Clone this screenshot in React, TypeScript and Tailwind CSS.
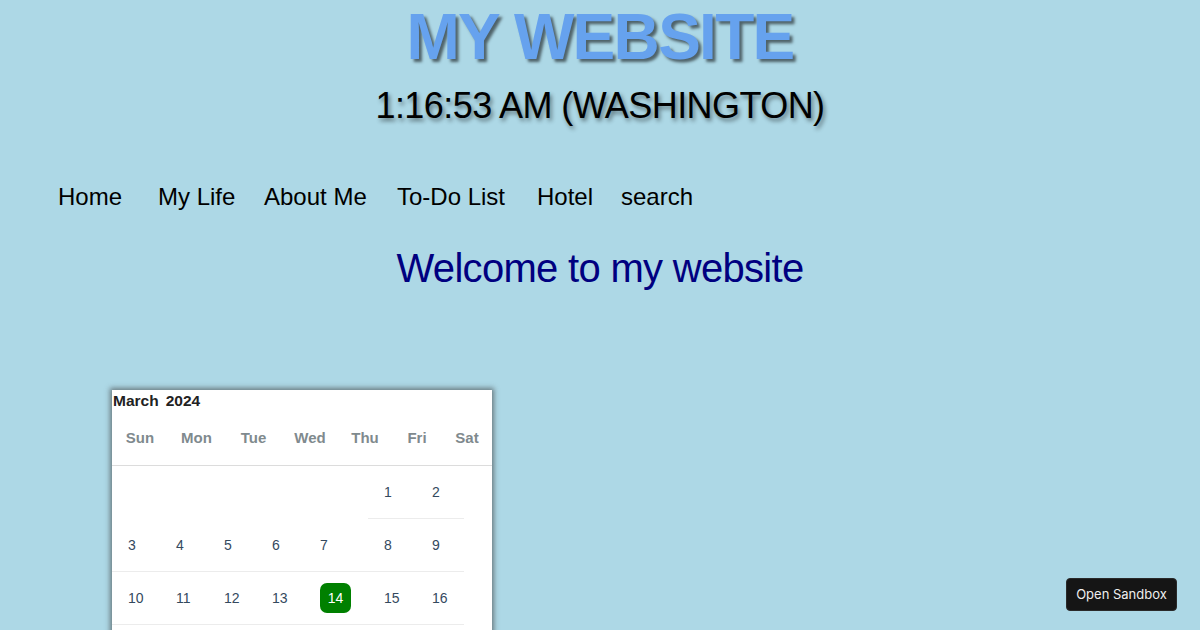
const navLinks = [
  { name: "Home", width: "w-[100px]" },
  { name: "My Life", width: "w-[106px]" },
  { name: "About Me", width: "w-[133px]" },
  { name: "To-Do List", width: "w-[140px]" },
  { name: "Hotel", width: "w-[84px]" },
  { name: "search", width: "w-auto" },
];

const weekDays = [
  { name: "Sun", width: "w-[56px]" },
  { name: "Mon", width: "w-[57px]" },
  { name: "Tue", width: "w-[57px]" },
  { name: "Wed", width: "w-[56px]" },
  { name: "Thu", width: "w-[54px]" },
  { name: "Fri", width: "w-[50px]" },
  { name: "Sat", width: "w-[50px]" },
];

// March 2024 starts on a Friday
const weeks: (number | null)[][] = [
  [null, null, null, null, null, 1, 2],
  [3, 4, 5, 6, 7, 8, 9],
  [10, 11, 12, 13, 14, 15, 16],
  [17, 18, 19, 20, 21, 22, 23],
];

const colWidths = ["w-[48px]", "w-[48px]", "w-[48px]", "w-[48px]", "w-[64px]", "w-[48px]", "w-[48px]"];

const Calendar = () => {
  return (
    <div className="w-[380px] bg-white shadow-[0_0_5px_2px_rgba(60,60,60,0.6)] font-['Liberation_Sans',Arial,sans-serif]">
      <div className="flex h-[22px] items-center gap-[7px] pl-px text-[15.5px] leading-none font-bold text-[#222]">
        <span>March</span>
        <span>2024</span>
      </div>
      <div className="flex h-[54px] items-center border-b border-[#dcdcdc] text-[15px] font-bold text-[#7f8a8e]">
        {weekDays.map((d) => (
          <span key={d.name} className={`${d.width} text-center`}>
            {d.name}
          </span>
        ))}
      </div>
      {weeks.map((week, i) => (
        <div key={i} className="flex">
          {week.map((day, j) => (
            <div
              key={j}
              className={`${colWidths[j]} flex h-[53px] items-center pl-[16px] text-[14px] text-[#34495e] ${
                day ? "border-b border-[#ececec]" : ""
              }`}
            >
              {day === 14 ? (
                <span className="flex h-[30px] w-[31px] items-center justify-center rounded-[7px] bg-[#008000] text-white">
                  14
                </span>
              ) : (
                day
              )}
            </div>
          ))}
        </div>
      ))}
    </div>
  );
};

export default function App() {
  return (
    <div className="relative h-[630px] w-full overflow-hidden bg-[#add8e6] font-['Liberation_Sans',Arial,sans-serif]">
      <header className="flex flex-col items-center">
        <h1 className="text-[64px] leading-[74px] font-bold tracking-[-1.7px] text-[#66a2ee] [text-shadow:3px_3px_3px_rgba(0,0,0,0.55)]">
          MY WEBSITE
        </h1>
        <div className="mt-[11px] text-[36px] leading-[41px] tracking-[-0.57px] text-black [text-shadow:2px_3px_4px_rgba(0,0,0,0.45)]">
          1:16:53 AM (WASHINGTON)
        </div>
      </header>

      <nav className="mt-[57px] flex items-center pl-[58px] text-[24px] leading-[28px] text-black">
        {navLinks.map((link) => (
          <a key={link.name} href="#" className={link.width}>
            {link.name}
          </a>
        ))}
      </nav>

      <h2 className="mt-[34px] text-center text-[40px] leading-[46px] tracking-[-0.7px] text-[#000080]">
        Welcome to my website
      </h2>

      <div className="mt-[99px] pl-[112px]">
        <Calendar />
      </div>

      <button className="absolute right-[23px] bottom-[19px] flex h-[33px] w-[111px] items-center justify-center rounded-[4px] border border-[#2a2a2a] bg-[#151515] text-[13px] text-[#eeeeee] font-['Inter',sans-serif]">
        Open Sandbox
      </button>
    </div>
  );
}
